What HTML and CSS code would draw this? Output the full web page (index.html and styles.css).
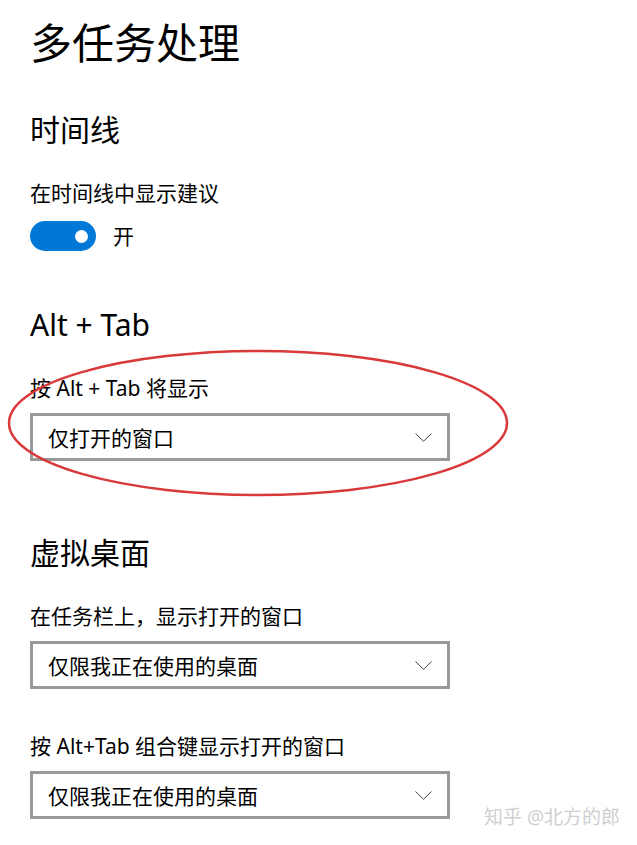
FILE: index.html
```html
<!DOCTYPE html>
<html lang="zh">
<head>
<meta charset="utf-8">
<link rel="stylesheet" href="styles.css">
</head>
<body>
<main class="page">
  <h1 class="title">多任务处理</h1>

  <section class="section first">
    <h2 class="heading">时间线</h2>
    <div class="label">在时间线中显示建议</div>
    <div class="toggle-row">
      <span class="toggle"><span class="knob"></span></span>
      <span class="toggle-text">开</span>
    </div>
  </section>

  <section class="section alt">
    <h2 class="heading">Alt + Tab</h2>
    <div class="label">按 Alt + Tab 将显示</div>
    <div class="select"><span>仅打开的窗口</span>
      <svg class="chev" width="17" height="9" viewBox="0 0 17 9"><path d="M0.5 0.5 L8.5 8.3 L16.5 0.5" fill="none" stroke="#444" stroke-width="1"/></svg>
    </div>
    <svg class="ring" width="506" height="152" viewBox="0 0 506 152"><ellipse cx="253" cy="76" rx="249" ry="72" fill="none" stroke="#d9393b" stroke-width="2.5"/></svg>
  </section>

  <section class="section vd">
    <h2 class="heading">虚拟桌面</h2>
    <div class="label">在任务栏上，显示打开的窗口</div>
    <div class="select"><span>仅限我正在使用的桌面</span>
      <svg class="chev" width="17" height="9" viewBox="0 0 17 9"><path d="M0.5 0.5 L8.5 8.3 L16.5 0.5" fill="none" stroke="#444" stroke-width="1"/></svg>
    </div>
    <div class="label gap-top">按 Alt+Tab 组合键显示打开的窗口</div>
    <div class="select"><span>仅限我正在使用的桌面</span>
      <svg class="chev" width="17" height="9" viewBox="0 0 17 9"><path d="M0.5 0.5 L8.5 8.3 L16.5 0.5" fill="none" stroke="#444" stroke-width="1"/></svg>
    </div>
  </section>

  <div class="watermark">知乎 @北方的郎</div>
</main>
</body>
</html>
```

FILE: styles.css
```css
html, body {
  margin: 0;
  padding: 0;
  background: #fff;
}
body {
  font-family: "Segoe UI", "Noto Sans", "Noto Sans CJK SC", sans-serif;
  color: #000;
  width: 637px;
  height: 845px;
  overflow: hidden;
}
.page {
  position: relative;
  padding: 19px 0 0 30px;
  height: 845px;
  box-sizing: border-box;
}
.title {
  margin: 0;
  font-size: 42px;
  line-height: 48px;
  font-weight: 400;
}
.section {
  position: relative;
  display: flex;
  flex-direction: column;
  align-items: flex-start;
}
.section.first { margin-top: 45px; }
.section.alt { margin-top: 56px; }
.section.vd { margin-top: 74px; }
.heading {
  margin: 0;
  font-size: 30px;
  line-height: 36px;
  font-weight: 400;
}
.label {
  margin-top: 31px;
  font-size: 21px;
  line-height: 28px;
}
.toggle-row {
  margin-top: 14px;
  display: flex;
  align-items: center;
  gap: 17px;
}
.toggle {
  width: 66px;
  height: 30px;
  border-radius: 15px;
  background: #0078d7;
  display: flex;
  align-items: center;
  justify-content: flex-end;
  padding-right: 8px;
  box-sizing: border-box;
}
.knob {
  width: 13px;
  height: 13px;
  border-radius: 50%;
  background: #fff;
}
.toggle-text {
  font-size: 21px;
  line-height: 28px;
}
.select {
  margin-top: 11px;
  width: 420px;
  height: 48px;
  box-sizing: border-box;
  border: 3px solid #999;
  display: flex;
  align-items: center;
  justify-content: space-between;
  padding: 0 15px 0 15px;
  font-size: 21px;
}
.label.gap-top { margin-top: 43px; }
.vd .select:first-of-type { margin-top: 13px; }
.chev { display: block; }
.ring {
  position: absolute;
  left: -25px;
  top: 40px;
  pointer-events: none;
}
.watermark {
  position: absolute;
  right: 17px;
  bottom: 15px;
  font-size: 19px;
  color: #cfcfcf;
}
```
